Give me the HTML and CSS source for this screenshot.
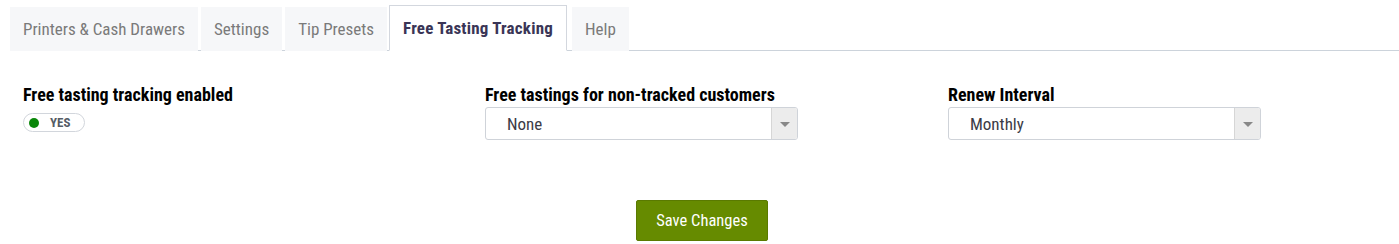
FILE: index.html
```html
<!DOCTYPE html>
<html>
<head>
  <meta charset="utf-8">
  <title>Settings</title>
  <link rel="stylesheet" href="styles.css">
</head>
<body>
  <ul class="tabs">
    <li class="tab">Printers &amp; Cash Drawers</li>
    <li class="tab">Settings</li>
    <li class="tab">Tip Presets</li>
    <li class="tab tab--active">Free Tasting Tracking</li>
    <li class="tab">Help</li>
  </ul>

  <div class="row">
    <div class="col">
      <label class="label">Free tasting tracking enabled</label>
      <div class="toggle">
        <span class="toggle__dot"></span>
        <span class="toggle__text">YES</span>
      </div>
    </div>
    <div class="col">
      <label class="label">Free tastings for non-tracked customers</label>
      <div class="select">
        <span class="select__value">None</span>
        <span class="select__arrow"></span>
      </div>
    </div>
    <div class="col">
      <label class="label">Renew Interval</label>
      <div class="select">
        <span class="select__value">Monthly</span>
        <span class="select__arrow"></span>
      </div>
    </div>
  </div>

  <div class="actions">
    <button class="btn-save">Save Changes</button>
  </div>
</body>
</html>
```

FILE: styles.css
```css
* {
	box-sizing: border-box;
}

body {
	margin: 0;
	padding: 5px 0 0 10px;
	font-family: "Roboto Condensed", "DejaVu Sans Condensed", Roboto, sans-serif;
	background: #fff;
	color: #000;
}

.tabs {
	list-style: none;
	margin: 0;
	padding: 0;
	display: flex;
	gap: 3px;
	border-bottom: 1px solid #ccd3db;
	height: 46px;
}

.tab {
	padding: 0 13px;
	display: flex;
	align-items: center;
	background: #f6f7f9;
	color: #7a7a7a;
	font-size: 17px;
	margin-top: 2px;
	height: 44px;
}

.tab--active {
	background: #fff;
	border: 1px solid #d3d7de;
	border-bottom: 1px solid #fff;
	color: #3a3556;
	font-weight: bold;
	font-size: 17px;
	letter-spacing: 0.2px;
	margin: 0 2px 0 -1px;
	height: 46px;
	padding: 0 13px;
}

.row {
	display: flex;
	margin-top: 32px;
}

.col {
	width: 463px;
	padding-left: 13px;
}

.col + .col {
	padding-left: 12px;
}

.label {
	display: block;
	font-size: 18px;
	font-weight: bold;
	line-height: 24px;
}

.toggle {
	display: inline-flex;
	align-items: center;
	margin-top: 6px;
	width: 62px;
	height: 19px;
	border: 1px solid #d2d6dc;
	border-radius: 10px;
	padding-left: 5px;
}

.toggle__dot {
	width: 10px;
	height: 10px;
	border-radius: 50%;
	background: #0a870a;
}

.toggle__text {
	margin-left: 11px;
	font-size: 13px;
	font-weight: bold;
	color: #555c66;
}

.select {
	display: flex;
	width: 313px;
	height: 33px;
	border: 1px solid #cfd3d9;
	border-radius: 3px;
	overflow: hidden;
}

.select__value {
	flex: 1;
	padding-left: 21px;
	display: flex;
	align-items: center;
	font-size: 17px;
	color: #3b3b46;
}

.select__arrow {
	width: 26px;
	background: #ececec;
	border-left: 1px solid #d6d6d6;
	position: relative;
}

.select__arrow::after {
	content: '';
	position: absolute;
	left: 8px;
	top: 14px;
	border-left: 5px solid transparent;
	border-right: 5px solid transparent;
	border-top: 5px solid #888;
}

.actions {
	display: flex;
	justify-content: center;
	margin-top: 60px;
	padding-right: 5px;
}

.btn-save {
	width: 132px;
	height: 41px;
	background: #668b00;
	border: 1px solid #5a7a00;
	border-radius: 2px;
	color: #fff;
	font-family: inherit;
	font-size: 16.5px;
}
```
